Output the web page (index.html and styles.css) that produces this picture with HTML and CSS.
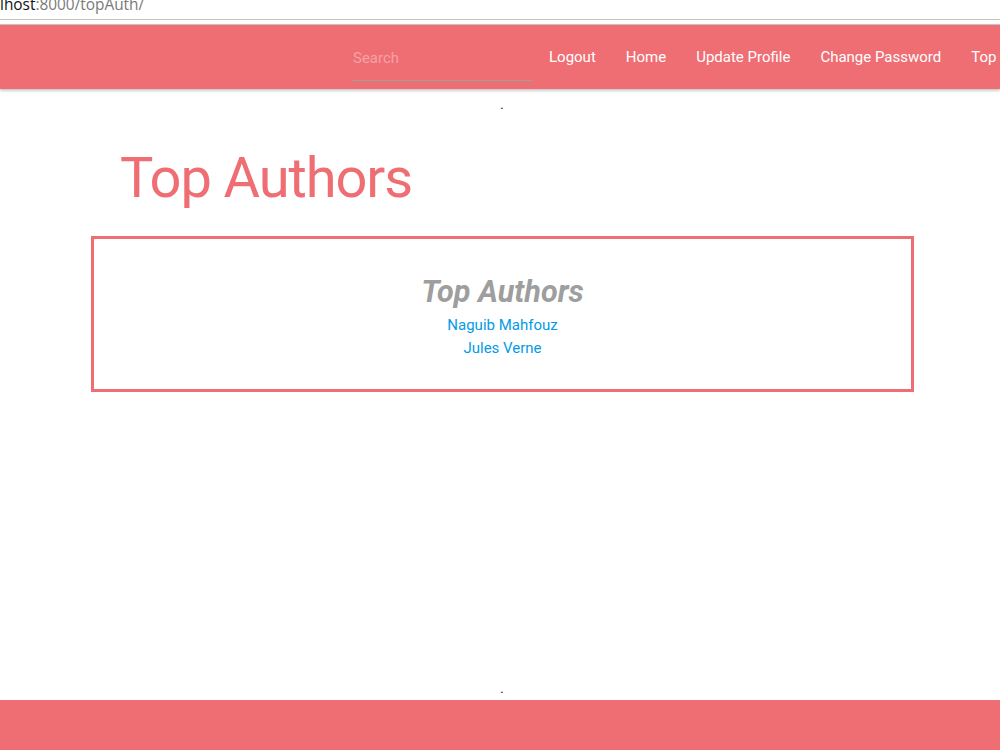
FILE: index.html
```html
<!DOCTYPE html>
<html lang="en">
<head>
  <meta charset="UTF-8">
  <meta name="viewport" content="width=device-width, initial-scale=1.0">
  <title>Top Authors</title>
  <link rel="stylesheet" href="styles.css">
</head>
<body>
  <div class="page">
    <div class="urlbar"><span class="host">lhost</span>:8000/topAuth/</div>
    <div class="tab-line"></div>

    <nav class="navbar">
      <div class="nav-inner">
        <div class="search-field">
          <input class="search" type="text" placeholder="Search">
        </div>
        <ul class="nav-links">
          <li><a href="#">Logout</a></li>
          <li><a href="#">Home</a></li>
          <li><a href="#">Update Profile</a></li>
          <li><a href="#">Change Password</a></li>
          <li><a href="#">Top Authors</a></li>
        </ul>
      </div>
    </nav>

    <main class="main">
      <div class="dot">.</div>

      <h1 class="page-title">Top Authors</h1>

      <div class="authors-box">
        <h4 class="box-title">Top Authors</h4>
        <a class="author" href="#">Naguib Mahfouz</a>
        <a class="author" href="#">Jules Verne</a>
      </div>

      <div class="dot dot-bottom">.</div>
    </main>

    <footer class="footer"></footer>
  </div>
</body>
</html>
```

FILE: styles.css
```css
body {
  margin: 0;
  font-family: Roboto, "Liberation Sans", sans-serif;
  background: #fff;
}
.page {
  min-height: 100vh;
  display: flex;
  flex-direction: column;
}
.urlbar {
  height: 19px;
  line-height: 10px;
  font-family: "Open Sans", "DejaVu Sans", sans-serif;
  font-size: 15.4px;
  color: #7a7a7a;
  border-bottom: 1px solid #c4c4c4;
  white-space: nowrap;
}
.urlbar .host {
  color: #111;
}
.tab-line {
  height: 4px;
  border-bottom: 1px solid #c8c8c8;
}
.navbar {
  height: 64px;
  background-color: #ef6e73;
  box-shadow: 0 2px 2px rgba(0, 0, 0, 0.14), 0 1px 4px rgba(0, 0, 0, 0.1);
  overflow: hidden;
  position: relative;
  z-index: 1;
}
.nav-inner {
  display: flex;
  align-items: center;
  height: 64px;
  padding-left: 352px;
  white-space: nowrap;
}
.search-field {
  flex-shrink: 0;
  width: 181px;
  height: 45px;
  margin-top: 2px;
  border-bottom: 1px solid #9e9e9e;
}
.search {
  width: 100%;
  height: 45px;
  padding: 0 1px;
  box-sizing: border-box;
  border: none;
  background: transparent;
  font-family: Roboto, sans-serif;
  font-size: 15px;
  color: #fff;
  outline: none;
}
.search::placeholder {
  color: #f5a2a5;
}
.nav-links {
  flex-shrink: 0;
  display: flex;
  list-style: none;
  margin: 0;
  padding: 0 0 0 1px;
}
.nav-links a {
  display: block;
  padding: 0 15px;
  line-height: 64px;
  font-size: 15px;
  color: #fff;
  text-decoration: none;
}
.main {
  flex: 1;
  display: flex;
  flex-direction: column;
}
.dot {
  margin-top: 5px;
  padding-left: 4px;
  text-align: center;
  font-size: 15px;
  line-height: 20px;
  color: #333;
}
.dot-bottom {
  margin-top: auto;
  margin-bottom: 2px;
}
.page-title {
  margin: 32px 0 25px 120px;
  font-size: 56px;
  line-height: 64.7px;
  letter-spacing: -1.1px;
  font-weight: 400;
  color: #ef6e73;
}
.authors-box {
  width: 823px;
  margin-left: 91px;
  box-sizing: border-box;
  border: 3px solid #ef6e73;
  padding: 35px 0 29px;
  display: flex;
  flex-direction: column;
  align-items: center;
}
.box-title {
  margin: 0 0 4px;
  font-size: 30.6px;
  line-height: 36px;
  font-weight: 700;
  font-style: italic;
  color: #9e9e9e;
}
.author {
  font-size: 15px;
  line-height: 23px;
  color: #039be5;
  text-decoration: none;
}
.footer {
  height: 50px;
  background-color: #ef6e73;
}
```
